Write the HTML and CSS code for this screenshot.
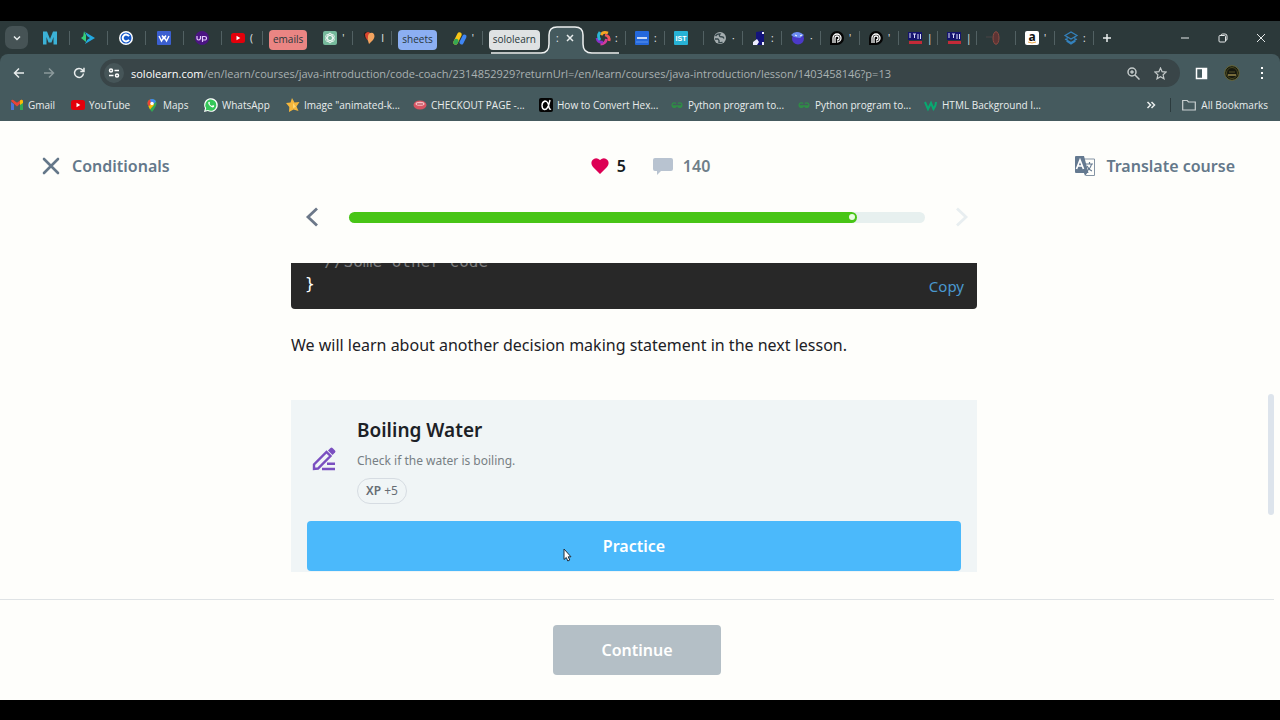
FILE: index.html
```html
<!DOCTYPE html>
<html lang="en">
<head>
<meta charset="utf-8">
<title>Conditionals</title>
<link rel="stylesheet" href="styles.css">
</head>
<body>
<div class="browser">
  <div class="tabstrip">
    <button class="tab-search" aria-label="Search tabs"><svg width="10" height="10" viewBox="0 0 10 10"><path d="M2 3.500l3 3 3-3" class="ln"/></svg></button>
    <div class="tab pinned"><svg class="fav" viewBox="0 0 14 14"><path d="M0 13.500V.5h4L7 8 10 .5h4v13h-3.500V6l-2 5.500h-3L3.500 6v7.500z" fill="#3bb1d6"/></svg></div>
    <div class="tab pinned"><svg class="fav" viewBox="0 0 14 14"><path d="M0 7l5-4v8z" fill="#35d07a"/><path d="M4 1l10 6-10 6 3-6z" fill="#23a8e0"/><path d="M3 0l2 5-3 2z" fill="#35d07a"/><path d="M5 4.500L9 7 5 9.500z" fill="#233d3e"/></svg></div>
    <div class="tab pinned"><svg class="fav" viewBox="0 0 14 14"><circle cx="7" cy="7" r="7" fill="#fff"/><circle cx="7" cy="7" r="5.500" fill="#1458c8"/><path d="M10 5.200a3.400 3.400 0 1 0 0 3.600" fill="none" stroke="#fff" stroke-width="2"/></svg></div>
    <div class="tab pinned"><svg class="fav" viewBox="0 0 14 14"><rect width="14" height="14" rx="1" fill="#3b5fd0"/><path d="M2 5l2.500 5L7 6l2.500 4L12 5M5 4.500l2 3 2-3" fill="none" stroke="#fff" stroke-width="1.400"/></svg></div>
    <div class="tab pinned"><svg class="fav" viewBox="0 0 14 14"><circle cx="7" cy="7" r="7" fill="#4b1482"/><path d="M2 5v2.500q0 1.500 1.500 1.500T5.500 7.500V5M7.500 11V5.500h2q2 0 2 1.800t-2 1.700h-2" fill="none" stroke="#e6c8ff" stroke-width="1.200"/></svg></div>
    <div class="tab video"><svg class="fav" viewBox="0 0 14 14"><rect y="2" width="14" height="10" rx="2.500" fill="#e3000b"/><path d="M5.500 4.800v4.400L9.300 7z" fill="#fff"/></svg><span>(</span></div>
    <div class="group red">emails</div>
    <div class="tab"><svg class="fav" viewBox="0 0 14 14"><rect width="14" height="14" rx="2" fill="#75b99b"/><g fill="none" stroke="#fff" stroke-width=".8"><ellipse cx="7" cy="7" rx="2.400" ry="4.800"/><ellipse cx="7" cy="7" rx="2.400" ry="4.800" transform="rotate(60 7 7)"/><ellipse cx="7" cy="7" rx="2.400" ry="4.800" transform="rotate(120 7 7)"/></g></svg><span>'</span></div>
    <div class="tab"><svg class="fav" viewBox="0 0 14 14"><path d="M2 2q4-3 6 1L6 9Q1 7 2 2" fill="#20201e"/><path d="M3 3q3-4 6 0v8Q3 9 3 3" fill="#d8442e"/><path d="M6 5q1-4 5-3 3 3 0 7l-4 4q-2-4-1-8" fill="#f3a35f"/></svg><span>I</span></div>
    <div class="group blue">sheets</div>
    <div class="tab"><svg class="fav" viewBox="0 0 14 14"><path d="M2.500 11.500l4-8" stroke="#f8c517" stroke-width="4.500" stroke-linecap="round"/><path d="M2.500 11.500l.8-1.500" stroke="#35a853" stroke-width="4.500" stroke-linecap="round"/><path d="M8.500 11.500l3-6" stroke="#4086f4" stroke-width="4" stroke-linecap="round"/></svg><span>'</span></div>
    <div class="group grey">sololearn</div>
    <div class="tab active">
      <svg class="outline" width="128" height="30" viewBox="0 0 128 30"><path d="M50 27q8 0 8-9V9q0-8 8-8h18q8 0 8 8v9q0 9 9 9v3H50z" fill="#455a5e"/><path d="M0 27h50q8 0 8-9V9q0-8 8-8h18q8 0 8 8v9q0 9 9 9h27" fill="none" stroke="#eef1f1" stroke-width="1.500"/></svg>
      <span class="front">:</span><button class="front close" aria-label="Close tab"><svg width="8" height="8" viewBox="0 0 8 8"><path d="M1 1l6 6M7 1L1 7" class="ln"/></svg></button>
    </div>
    <div class="tab"><svg class="fav" viewBox="0 0 14 14"><g fill="none" stroke-width="2.800"><path d="M5 4q2-4 7-2" stroke="#f5a623"/><path d="M9 4q5 1 4 6" stroke="#f0565a"/><path d="M10.500 8q-1 5-6 5" stroke="#d43a9a"/><path d="M7 11Q2 12 1 7" stroke="#8b2fc9"/><path d="M4 9Q1 5 4 1" stroke="#2bb6d6"/></g></svg><span>:</span></div>
    <div class="tab"><svg class="fav" viewBox="0 0 14 14"><rect width="14" height="14" rx="1" fill="#2468dc"/><path d="M2 7h10" stroke="#fff" stroke-width="1.500"/><path d="M1 11h12" stroke="#5c94ee"/></svg><span>:</span></div>
    <div class="tab"><svg class="fav" viewBox="0 0 14 14"><rect width="14" height="14" rx="1" fill="#27b2d6"/><text x="7" y="10" class="ist">IST</text></svg></div>
    <div class="tab"><svg class="fav" viewBox="0 0 14 14"><circle cx="7" cy="7" r="6" fill="#a5aeb0"/><path d="M2.500 5q2-2.500 4.500-2-1 1-.5 2t2 .8q2 0 2.500 1.700M2 8h3q1.500 1 1 3.500 2 .5 3.500-.5" fill="none" stroke="#35464a" stroke-width="1.400"/></svg><span>·</span></div>
    <div class="tab"><svg class="fav" viewBox="0 0 14 14"><path d="M4 1l7-1 1 3v11H2l2-5z" fill="#14147c"/><path d="M1 11l4-3 2 3-2 3H1zM10 1h2v2h-2zM10 11h2v3h-2z" fill="#eef"/></svg><span>:</span></div>
    <div class="tab"><svg class="fav" viewBox="0 0 14 14"><circle cx="7" cy="7.500" r="6" fill="#4b39c8"/><path d="M0 4q4-5 10-2l3 2-4 3-6-1z" fill="#6c8df2"/><path d="M4 4l2 1M9 5l2-1" stroke="#fff"/></svg><span>·</span></div>
    <div class="tab"><svg class="fav" viewBox="0 0 14 14"><path d="M7 0a7 7 0 0 1 0 14H0V7a7 7 0 0 1 7-7" fill="#050505"/><path d="M3 12V7a4 4 0 1 1 4 4M5 12V7a2 2 0 1 1 2 2" fill="none" stroke="#fff" stroke-width="1.300"/></svg><span>'</span></div>
    <div class="tab"><svg class="fav" viewBox="0 0 14 14"><path d="M7 0a7 7 0 0 1 0 14H0V7a7 7 0 0 1 7-7" fill="#050505"/><path d="M3 12V7a4 4 0 1 1 4 4M5 12V7a2 2 0 1 1 2 2" fill="none" stroke="#fff" stroke-width="1.300"/></svg><span>'</span></div>
    <div class="tab"><svg class="fav" viewBox="0 0 14 14"><path d="M0 1h14v8H0z" fill="#15146e"/><path d="M1 10h13v3H1z" fill="#c42a38"/><path d="M2 2v5M5 3h3M6.500 3v4M10 3v5M12.500 3v5" stroke="#dcdcf8"/></svg><span>|</span></div>
    <div class="tab"><svg class="fav" viewBox="0 0 14 14"><path d="M0 1h14v8H0z" fill="#15146e"/><path d="M1 10h13v3H1z" fill="#c42a38"/><path d="M2 2v5M5 3h3M6.500 3v4M10 3v5M12.500 3v5" stroke="#dcdcf8"/></svg><span>|</span></div>
    <div class="tab"><svg class="fav" viewBox="0 0 14 14"><ellipse cx="10" cy="7" rx="3" ry="6.300" fill="#5d3434" stroke="#8e4b42"/><path d="M0 6h6" stroke="#4a4545"/></svg></div>
    <div class="tab"><svg class="fav" viewBox="0 0 14 14"><rect width="14" height="14" rx="2" fill="#fff"/><text x="7" y="10" class="amz">a</text><path d="M3 11q4 2 8 0" fill="none" stroke="#eaa646"/></svg><span>'</span></div>
    <div class="tab"><svg class="fav" viewBox="0 0 14 14"><path d="M1 4.500l6-3.500 6 3.500L7 8zM3 6.500v4L7 13l4-2.500v-4M1 8l6 3.500L13 8" fill="none" stroke="#3482bd" stroke-width="1.200"/></svg><span>:</span></div>
    <button class="new-tab" aria-label="New tab"><svg width="10" height="10" viewBox="0 0 10 10"><path d="M5 1v8M1 5h8" class="ln"/></svg></button>
    <div class="window-controls">
      <button aria-label="Minimize"><svg width="10" height="10" viewBox="0 0 10 10"><path d="M1 5h8" class="thin"/></svg></button>
      <button aria-label="Restore"><svg width="10" height="10" viewBox="0 0 10 10"><path d="M1 3.500Q1 2.500 2 2.500h4.500q1 0 1 1V8q0 1-1 1H2Q1 9 1 8zM3 2.500Q3 1 4.500 1H7q2 0 2 2v3q0 1.500-1.500 1.500" class="thin"/></svg></button>
      <button aria-label="Close"><svg width="10" height="10" viewBox="0 0 10 10"><path d="M1 1l8 8M9 1L1 9" class="thin"/></svg></button>
    </div>
  </div>
  <div class="toolbar">
    <div class="nav">
      <button aria-label="Back"><svg width="12" height="12" viewBox="0 0 12 12"><path d="M11 6H2M6 1.500L1.500 6 6 10.500" class="ln"/></svg></button>
      <button class="dim" aria-label="Forward"><svg width="12" height="12" viewBox="0 0 12 12"><path d="M1 6h9M6 1.500L10.500 6 6 10.500" class="ln"/></svg></button>
      <button aria-label="Reload"><svg width="12" height="12" viewBox="0 0 12 12"><path d="M10.500 6.500A4.500 4.500 0 1 1 9.500 3l1 1.200M11 .8v3.700H7.300" class="ln"/></svg></button>
    </div>
    <div class="omnibox">
      <button class="site" aria-label="Site information"><svg width="12" height="12" viewBox="0 0 12 12"><path d="M6.500 3.500H11M1 8.500h4.500" class="ln"/><circle cx="3" cy="3.500" r="1.500" class="ln"/><circle cx="9" cy="8.500" r="1.500" class="ln"/></svg></button>
      <div class="url"><b>sololearn.com</b>/en/learn/courses/java-introduction/code-coach/2314852929?returnUrl=/en/learn/courses/java-introduction/lesson/1403458146?p=13</div>
      <button aria-label="Zoom"><svg width="13" height="13" viewBox="0 0 13 13"><circle cx="5" cy="5" r="4" class="ln"/><path d="M8 8l4.500 4.500M5 3.200v3.600M3.200 5h3.600" class="ln"/></svg></button>
      <button aria-label="Bookmark this tab"><svg width="13" height="13" viewBox="0 0 13 13"><path d="M6.500 1l1.600 3.700 4 .4-3 2.700.9 4-3.500-2.100L3 11.800l.9-4-3-2.700 4-.4z" class="star"/></svg></button>
    </div>
    <div class="tools">
      <button aria-label="Side panel"><svg width="13" height="13" viewBox="0 0 13 13"><path d="M1.500 1.500h10v10h-10z" fill="none" stroke="#fff" stroke-width="1.500"/><path d="M7 1h5v11H7z" fill="#fff"/></svg></button>
      <button aria-label="Profile"><svg width="16" height="16" viewBox="0 0 16 16"><circle cx="8" cy="8" r="7.300" fill="#111510" stroke="#6a6834"/><circle cx="8" cy="8" r="5.500" fill="#17190f" stroke="#4a481f"/><path d="M4 10h8" stroke="#d8bf69"/><path d="M5 7h6" stroke="#57522a"/></svg></button>
      <button aria-label="Menu"><svg width="4" height="14" viewBox="0 0 4 14"><path d="M1 1h2v2H1zM1 6h2v2H1zM1 11h2v2H1z" fill="#fff"/></svg></button>
    </div>
  </div>
  <nav class="bookmarks">
    <div class="marks">
      <a href="#"><svg class="fav" viewBox="0 0 14 14"><path d="M1 12V4l3 2v6z" fill="#4b74d8"/><path d="M10 6l3-2v8h-3z" fill="#34a853"/><path d="M1 3q1-2 3-.5l3 2.300 3-2.300Q12 1 13 3L7 8.500z" fill="#ea4335"/><path d="M10 2.500Q12 1 13 3v2l-3 2z" fill="#fbbc04"/></svg>Gmail</a>
      <a href="#"><svg class="fav" viewBox="0 0 14 14"><rect y="2" width="14" height="10" rx="2.500" fill="#e3000b"/><path d="M5.500 4.800v4.400L9.300 7z" fill="#fff"/></svg>YouTube</a>
      <a href="#"><svg class="fav" viewBox="0 0 14 14"><path d="M2.500 5.500a4.500 4.500 0 0 1 9 0Q11 9 7 14 3 9 2.500 5.500" fill="#34a853"/><path d="M2.500 6a4.500 4.500 0 0 1 3-4.800L8 4 3.500 8.500z" fill="#ea4335"/><path d="M5 1.500a4.500 4.500 0 0 1 6 2L7 8z" fill="#4285f4"/><path d="M3.500 8.500L8 4l1 3-4 4.500z" fill="#fbbc04"/><circle cx="7" cy="5.500" r="1.700" fill="#fff"/></svg>Maps</a>
      <a href="#"><svg class="fav" viewBox="0 0 14 14"><path d="M0 14l1-3.700A6.800 6.800 0 1 1 3.700 13z" fill="#fff"/><path d="M1.500 12.500l.7-2.300a5.600 5.600 0 1 1 1.800 1.700z" fill="#35c659"/><path d="M4.500 4q1-1 1.500 1l-.5 1q1 1.500 2.500 2l1-1q2 .6 1 1.800-1.500 1.500-4-.8Q3.500 5.500 4.500 4" fill="#fff"/></svg>WhatsApp</a>
      <a href="#"><svg class="fav" viewBox="0 0 14 14"><path d="M6 0l2.500 4.500 5-.5-3 4.500 2 4.500-5-1.500L3 14l.3-5L0 5l4.500-.5z" fill="#f4b63c"/><path d="M7 5l3 4-3 1z" fill="#ffd873"/></svg>Image "animated-k...</a>
      <a href="#"><svg class="fav" viewBox="0 0 14 14"><ellipse cx="7" cy="7" rx="6.500" ry="4.500" fill="#d85462"/><ellipse cx="7" cy="5.800" rx="4.500" ry="2" fill="#f6bdc2"/><path d="M4 6h6" stroke="#a93040"/></svg>CHECKOUT PAGE -...</a>
      <a href="#"><svg class="fav" viewBox="0 0 14 14"><rect width="14" height="14" rx="2" fill="#050505"/><path d="M11 2Q9 12 5.500 11.500 3 11 3 7.500T6 3q3 0 4 6 .5 3 2 2" fill="none" stroke="#fff" stroke-width="1.400"/></svg>How to Convert Hex...</a>
      <a href="#"><svg class="fav" viewBox="0 0 14 14"><path d="M6 5.500a2.300 2.300 0 1 0 .5 2.500H2M8 5.500a2.300 2.300 0 1 1-.5 2.500H12" fill="none" stroke="#2f8d46" stroke-width="1.300"/></svg>Python program to...</a>
      <a href="#"><svg class="fav" viewBox="0 0 14 14"><path d="M6 5.500a2.300 2.300 0 1 0 .5 2.500H2M8 5.500a2.300 2.300 0 1 1-.5 2.500H12" fill="none" stroke="#2f8d46" stroke-width="1.300"/></svg>Python program to...</a>
      <a href="#"><svg class="fav" viewBox="0 0 14 14"><path d="M1 4l3 7 3-6 2.500 6Q12 8 12 4" fill="none" stroke="#08a970" stroke-width="2"/></svg>HTML Background I...</a>
    </div>
    <button class="more" aria-label="More bookmarks"><svg width="10" height="8" viewBox="0 0 10 8"><path d="M1.500 1l3 3-3 3M5.500 1l3 3-3 3" class="ln"/></svg></button>
    <a class="all" href="#"><svg class="fav" viewBox="0 0 14 14"><path d="M.7 2.500h4.500L6.500 4h6.800v8H.7z" fill="none" stroke="#c9d0d1" stroke-width="1.200"/></svg>All Bookmarks</a>
  </nav>
</div>

<main class="page">
  <header class="top">
    <a class="back" href="#"><svg width="18" height="18" viewBox="0 0 18 18"><path d="M2 2l14 14M16 2L2 16" fill="none" stroke="#647789" stroke-width="2.600" stroke-linecap="round"/></svg>Conditionals</a>
    <div class="stats">
      <span class="hearts"><svg width="18" height="16" viewBox="0 0 18 16"><path d="M9 16L2 9Q-1 5 1.500 2 5-1.500 9 2q4-3.500 7.500 0Q19 5 16 9z" fill="#dd0054"/></svg>5</span>
      <button class="comments"><svg width="22" height="20" viewBox="0 0 22 20"><path d="M3 2h16q2 0 2 2v9q0 2-2 2H9l-4 4v-4H3q-2 0-2-2V4q0-2 2-2" fill="#b8c3d0"/></svg>140</button>
    </div>
    <button class="translate"><svg width="22" height="22" viewBox="0 0 22 22"><path d="M8 4h12.500v16.500H12L9 16" fill="#fefefb" stroke="#8594a4"/><path d="M2 1h8l4.500 17H2q-1 0-1-1V2q0-1 1-1M10 17h4l-3 4z" fill="#647990"/><path d="M2.500 14L6 5l3.500 9M4 11h4" fill="none" stroke="#fff" stroke-width="1.700"/><path d="M12 9h7M15.500 7v2M17.500 9q-1 5-5 7M13 11q2 4 5 5" fill="none" stroke="#647990" stroke-width="1.200"/></svg>Translate course</button>
  </header>

  <div class="view">
    <div class="steps">
      <button aria-label="Previous"><svg width="14" height="20" viewBox="0 0 14 20"><path d="M12 1.500L3 10l9 8.500" fill="none" stroke="#6c7889" stroke-width="2.800"/></svg></button>
      <div class="track" role="progressbar" aria-label="Lesson progress" aria-valuenow="88"><div class="fill" style="width:88.2%"><i class="dot"></i></div></div>
      <button aria-label="Next" disabled><svg width="14" height="20" viewBox="0 0 14 20"><path d="M2 1.500l9 8.500-9 8.500" fill="none" stroke="#e8eef0" stroke-width="2.800"/></svg></button>
    </div>

    <div class="scroll">
      <article class="lesson">
        <div class="code">
          <pre><span class="comment">  //Some other code</span>
}</pre>
          <button class="copy">Copy</button>
        </div>
        <p class="text">We will learn about another decision making statement in the next lesson.</p>
        <section class="card">
          <div class="coach">
            <svg width="24" height="24" viewBox="0 0 24 24"><path d="M2 22v-4.500L14.500 5l4 4L6 21.500z" fill="none" stroke="#7a4fc0" stroke-width="2.400"/><path d="M16 3.500L18.500 1q1-1 2 0L23 3.500q1 1 0 2L20.500 8z" fill="#7a4fc0"/><path d="M15 16.800h8M10 22h13" stroke="#7a4fc0" stroke-width="2.400"/></svg>
            <div>
              <h2>Boiling Water</h2>
              <p class="hint">Check if the water is boiling.</p>
              <span class="xp"><b>XP</b> +5</span>
            </div>
          </div>
          <button class="practice">Practice</button>
          <svg class="cursor" width="9" height="14" viewBox="0 0 9 14"><path d="M1 1v10.500l2.300-2 1.500 3.500 2-1-1.600-3.200H8z" fill="#fff" stroke="#222c38"/></svg>
        </section>
      </article>
    </div>
  </div>

  <footer class="bottom"><button class="continue">Continue</button></footer>
  <div class="thumb"></div>
</main>
</body>
</html>
```

FILE: styles.css
```css
* { box-sizing: border-box; }
body {
  margin: 0;
  padding: 21px 0 20px;
  min-height: 100vh;
  display: flex;
  flex-direction: column;
  background: #000;
  font-family: "Noto Sans", "Open Sans", sans-serif;
}
button {
  border: 0;
  padding: 0;
  background: none;
  font: inherit;
  color: inherit;
  display: flex;
  align-items: center;
  justify-content: center;
}
a { color: inherit; text-decoration: none; }
svg { flex: none; display: block; }
h2, p, pre { margin: 0; }

/* Browser chrome */
.browser {
  background: #2c393a;
  color: #e9eded;
  font-family: "Open Sans", "Noto Sans", sans-serif;
  font-size: 10px;
}
.ln { fill: none; stroke: currentColor; stroke-width: 1.5; }
.thin { fill: none; stroke: #e4e8e8; stroke-width: 1; }
.fav { width: 14px; height: 14px; overflow: visible; }
.tabstrip {
  display: flex;
  align-items: center;
  height: 33px;
  padding-left: 5px;
}
.tab-search {
  width: 23px;
  height: 23px;
  margin-right: 4px;
  border-radius: 7px;
  background: #465355;
}
.tab {
  flex: none;
  display: flex;
  align-items: center;
  gap: 5px;
  width: 39px;
  height: 14px;
  padding-left: 9px;
  border-right: 1px solid #526163;
}
.tab.pinned { width: 38px; padding-left: 11px; }
.tab.video { width: 41px; }
.group {
  flex: none;
  height: 20px;
  margin: 4px 7px 0 6px;
  padding: 0 4px;
  border-radius: 4px;
  color: #27363a;
  line-height: 19px;
}
.red { background: #ea8583; }
.blue { background: #8caff2; }
.grey { background: #dfe2e3; }
.tab.active {
  position: relative;
  width: 40px;
  height: 33px;
  border: 0;
  gap: 7px;
}
.outline { position: absolute; left: -56px; top: 5px; }
.front { position: relative; }
.ist { font: 700 7px "Liberation Sans", sans-serif; fill: #fff; text-anchor: middle; }
.amz { font: 700 12px "Open Sans", sans-serif; fill: #111; text-anchor: middle; }
.new-tab { width: 26px; height: 24px; }
.window-controls { display: flex; margin-left: auto; }
.window-controls button { width: 38px; height: 24px; }

.toolbar {
  display: flex;
  align-items: center;
  height: 38px;
  padding: 0 4px;
  border-radius: 8px 8px 0 0;
  background: #455a5e;
}
.nav { display: flex; width: 96px; }
.nav button { width: 30px; height: 24px; }
.dim { color: #8b999b; }
.omnibox {
  flex: 1;
  display: flex;
  align-items: center;
  gap: 14px;
  height: 28px;
  padding: 0 13px 0 4px;
  border-radius: 14px;
  background: #394548;
  color: #c4caca;
}
.site { width: 20px; height: 20px; border-radius: 10px; background: #465558; color: #fff; }
.url { flex: 1; margin-left: -7px; font-size: 11px; color: #a9b1b2; white-space: nowrap; }
.url b { font-weight: 400; color: #fff; }
.star { fill: none; stroke: currentColor; stroke-width: 1.2; }
.tools { display: flex; align-items: center; gap: 1px; padding-left: 7px; }
.tools button { width: 29px; height: 24px; }
.bookmarks {
  display: flex;
  align-items: center;
  height: 29px;
  padding: 0 12px 4px 10px;
  background: #455a5e;
}
.marks {
  flex: 1;
  display: grid;
  grid-template-columns: 61px 74px 59px 82px 127px 126px 131px repeat(3, 127px);
}
.bookmarks a { display: flex; align-items: center; gap: 4px; white-space: nowrap; }
.more { padding-right: 14px; border-right: 1px solid #2c3b3e; height: 14px; }
.bookmarks .all { margin-left: 11px; gap: 5px; }

/* Lesson page */
.page {
  position: relative;
  flex: 1;
  display: flex;
  flex-direction: column;
  background: #fefefb;
  color: #1c2126;
}
.top {
  display: grid;
  grid-template-columns: 1fr auto 1fr;
  align-items: center;
  height: 32px;
  margin-top: 29px;
  padding: 0 45px 0 42px;
  font-size: 16px;
  font-weight: 600;
  color: #64788a;
}
.back, .hearts, .comments { display: flex; align-items: center; }
.back { gap: 12px; }
.stats { display: flex; gap: 26px; padding-left: 24px; }
.hearts { gap: 8px; color: #15191c; }
.comments { gap: 9px; color: #6f7f88; }
.translate { justify-self: end; gap: 10px; }
.view, .scroll { padding-right: 6px; }
.steps {
  display: flex;
  align-items: center;
  gap: 30px;
  width: 664px;
  max-width: 100%;
  height: 30px;
  margin: 20px auto 0;
}
.track { flex: 1; height: 11px; border-radius: 6px; background: #e7f0ef; }
.fill {
  display: flex;
  align-items: center;
  justify-content: flex-end;
  height: 11px;
  padding-right: 2px;
  border-radius: 6px;
  background: #48c516;
}
.dot { width: 6px; height: 6px; border-radius: 3px; background: #e9fbe2; }
.lesson { width: 686px; max-width: 100%; margin: 31px auto 27px; }
.code {
  display: flex;
  align-items: flex-end;
  justify-content: space-between;
  height: 46px;
  padding: 0 13px 12px 14px;
  border-radius: 0 0 4px 4px;
  background: #282828;
  color: #fff;
  overflow: hidden;
}
.code pre { margin-bottom: 2px; font: 16px/22px "DejaVu Sans Mono", monospace; }
.comment { color: #7c7c7c; }
.copy { color: #4a98cf; font-size: 15px; line-height: 22px; }
.text { margin-top: 21px; font-size: 16px; line-height: 30px; }
.card { position: relative; margin-top: 40px; padding: 14px 16px 1px; background: #f0f5f6; }
.coach { display: flex; align-items: center; gap: 21px; padding-left: 5px; }
.card h2 { font-size: 19px; line-height: 32px; font-weight: 600; }
.hint { margin-top: 5px; font-size: 12px; line-height: 20px; color: #777f84; }
.xp {
  display: inline-block;
  margin-top: 7px;
  padding: 0 8px;
  border: 1px solid #d6dce2;
  border-radius: 13px;
  font-size: 12px;
  line-height: 24px;
  color: #666d74;
  vertical-align: top;
}
.xp b { font-weight: 600; }
.practice, .continue { height: 50px; border-radius: 4px; color: #fff; font-size: 16px; font-weight: 600; }
.practice { width: 100%; margin-top: 17px; background: #4bb9fb; }
.cursor { position: absolute; left: 272px; top: 148px; }
.bottom {
  display: flex;
  justify-content: center;
  margin-right: 6px;
  padding: 25px 0;
  border-top: 1px solid #dfe3e5;
}
.continue { width: 168px; background: #b4bfc6; }
.thumb { position: absolute; right: 6px; top: 273px; width: 6px; height: 121px; border-radius: 3px; background: #dde4ec; }
```
